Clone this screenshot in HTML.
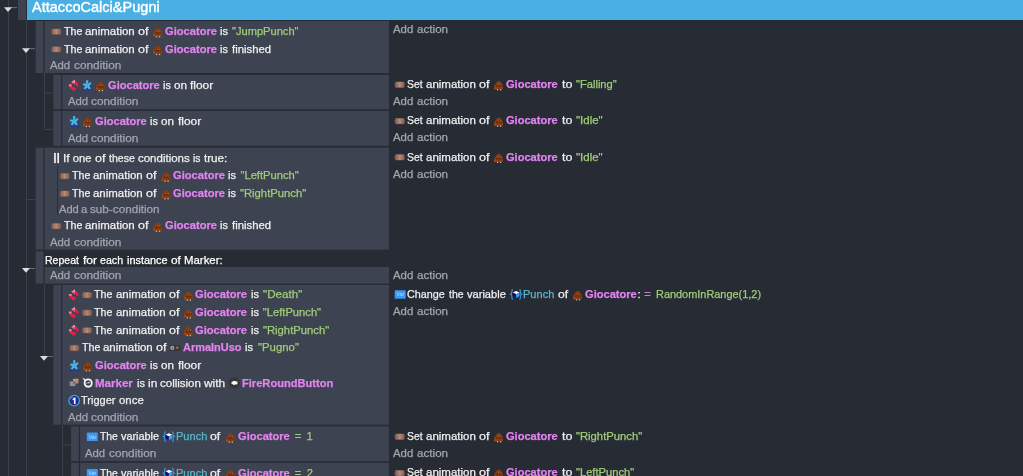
<!DOCTYPE html>
<html lang="en">
<head>
<meta charset="utf-8">
<title>AttaccoCalci&amp;Pugni - Events</title>
<style>
html,body{margin:0;padding:0;background:#272b34;}
body{width:1023px;height:476px;overflow:hidden;position:relative;font-family:"Liberation Sans", sans-serif;font-size:11.2px;}
#sheet{position:absolute;left:0;top:0;width:1023px;height:476px;overflow:hidden;background:#272b34;}
#txt{position:absolute;left:0;top:0;width:1023px;height:476px;will-change:transform;}
.i{position:absolute;overflow:visible;}
.t{position:absolute;white-space:pre;transform-origin:0 0;-webkit-text-stroke:0.25px currentColor;line-height:14px;height:14px;color:#f0f0f0;}
.n{color:#f0f0f0;}
.a{color:#a3a6ad;}
.o{color:#e283f0;font-weight:bold;}
.s{color:#a0cd7b;}
.v{color:#56b8cc;}
.op{color:#c77ddb;}
.tt{color:#ffffff;}
.h{color:#fff;font-size:14.4px;line-height:18px;height:18px;-webkit-text-stroke-width:0.4px;}
</style>
</head>
<body>
<div id="sheet">
<svg class="i" style="left:0;top:0" width="1023" height="476" viewBox="0 0 1023 476">
<defs><linearGradient id="fg" x1="0" x2="1" y1="0" y2="0"><stop offset="0" stop-color="#6b5049"/><stop offset="0.2" stop-color="#9a7362"/><stop offset="0.5" stop-color="#b58b79"/><stop offset="0.8" stop-color="#9a7362"/><stop offset="1" stop-color="#6b5049"/></linearGradient></defs>
<rect x="8" y="0" width="1" height="476" fill="#3b404d"/>
<rect x="26" y="21" width="1" height="476" fill="#3b404d"/>
<rect x="26" y="199" width="9" height="1" fill="#3b404d"/>
<rect x="44" y="73" width="1" height="57" fill="#3b404d"/>
<rect x="44" y="92.5" width="9" height="1" fill="#3b404d"/>
<rect x="44" y="129" width="9" height="1" fill="#3b404d"/>
<rect x="44" y="284" width="1" height="73" fill="#3b404d"/>
<rect x="62" y="425" width="1" height="60" fill="#3b404d"/>
<rect x="62" y="444.5" width="9" height="1" fill="#3b404d"/>
<rect x="18" y="0" width="8" height="20" fill="#3e4351"/>
<rect x="27" y="0" width="996" height="20" fill="#4ab0e4"/>
<rect x="35.7" y="21" width="7.8" height="52" fill="#3e4351"/>
<rect x="44.7" y="21" width="344.3" height="52" fill="#3e4351"/>
<rect x="53.4" y="75" width="7.8" height="34.3" fill="#3e4351"/>
<rect x="62.4" y="75" width="326.6" height="34.3" fill="#3e4351"/>
<rect x="53.4" y="111" width="7.8" height="34.8" fill="#3e4351"/>
<rect x="62.4" y="111" width="326.6" height="34.8" fill="#3e4351"/>
<rect x="35.7" y="147.7" width="7.8" height="101.9" fill="#3e4351"/>
<rect x="44.7" y="147.7" width="344.3" height="101.9" fill="#3e4351"/>
<rect x="57" y="166" width="1" height="49" fill="#2b2f3a"/>
<rect x="35.7" y="251.2" width="7.8" height="32.4" fill="#3e4351"/>
<rect x="44.7" y="267.0" width="344.3" height="16.6" fill="#3e4351"/>
<rect x="53.4" y="285" width="7.8" height="139.7" fill="#3e4351"/>
<rect x="62.4" y="285" width="326.6" height="139.7" fill="#3e4351"/>
<rect x="71.1" y="426.4" width="7.8" height="34.8" fill="#3e4351"/>
<rect x="80.1" y="426.4" width="308.9" height="34.8" fill="#3e4351"/>
<rect x="71.1" y="462.8" width="7.8" height="17.2" fill="#3e4351"/>
<rect x="80.1" y="462.8" width="308.9" height="17.2" fill="#3e4351"/>
<g transform="translate(3.40 6.40)"><rect x="8" y="0.9" width="5.6" height="0.8" fill="#7a7e88"/><path d="M0.6 0.8 L8.6 0.8 L4.6 5.6Z" fill="#dcdcdc"/></g>
<g transform="translate(21.40 47.40)"><rect x="8" y="0.9" width="5.6" height="0.8" fill="#7a7e88"/><path d="M0.6 0.8 L8.6 0.8 L4.6 5.6Z" fill="#dcdcdc"/></g>
<g transform="translate(21.40 267.20)"><rect x="8" y="0.9" width="5.6" height="0.8" fill="#7a7e88"/><path d="M0.6 0.8 L8.6 0.8 L4.6 5.6Z" fill="#dcdcdc"/></g>
<g transform="translate(39.40 355.20)"><rect x="8" y="0.9" width="5.6" height="0.8" fill="#7a7e88"/><path d="M0.6 0.8 L8.6 0.8 L4.6 5.6Z" fill="#dcdcdc"/></g>
<g transform="translate(51.10 28.50) scale(1.0000 1.0323)"><rect x="0" y="0" width="10.3" height="6.2" rx="2.2" fill="#6b5049"/><rect x="0.3" y="0.6" width="9.7" height="5" rx="1.8" fill="url(#fg)"/><rect x="3.1" y="0.4" width="0.5" height="5.4" fill="#7c5a4e" opacity="0.4"/><rect x="6.7" y="0.4" width="0.5" height="5.4" fill="#7c5a4e" opacity="0.4"/></g>
<g transform="translate(152.80 27.80)"><path d="M4.9 0 C6.1 0.5 7.4 1.9 8.3 3.3 C9 4.5 9.3 6 9.1 7.5 C9 8.3 8.6 8.7 7.9 8.7 L1.7 8.7 C0.7 8.7 0 8.1 0.1 6.8 C0.3 5.3 0.8 4.3 1.5 3.3 C2.4 1.9 3.7 0.5 4.9 0Z" fill="#8c3c0e"/><path d="M2.4 4.4 C3.6 3.3 7 3.3 8.2 4.4 L8 6.3 C6.6 5.6 4 5.6 2.6 6.3Z" fill="#64290a" opacity="0.85"/><path d="M0.4 6.6 C1.6 6.4 2.4 7 2.6 8.4 L1.4 8.5 C0.6 8.3 0.3 7.6 0.4 6.6Z" fill="#a9521a" opacity="0.7"/><rect x="4.2" y="3.5" width="0.9" height="0.9" fill="#8f8a86"/><rect x="6.4" y="3.5" width="0.9" height="0.9" fill="#8f8a86"/><rect x="3.1" y="8.4" width="1.3" height="1.2" fill="#c9bfbf"/><rect x="6.1" y="8.4" width="1.3" height="1.2" fill="#c9bfbf"/></g>
<g transform="translate(51.10 46.20) scale(1.0000 1.0323)"><rect x="0" y="0" width="10.3" height="6.2" rx="2.2" fill="#6b5049"/><rect x="0.3" y="0.6" width="9.7" height="5" rx="1.8" fill="url(#fg)"/><rect x="3.1" y="0.4" width="0.5" height="5.4" fill="#7c5a4e" opacity="0.4"/><rect x="6.7" y="0.4" width="0.5" height="5.4" fill="#7c5a4e" opacity="0.4"/></g>
<g transform="translate(152.80 45.50)"><path d="M4.9 0 C6.1 0.5 7.4 1.9 8.3 3.3 C9 4.5 9.3 6 9.1 7.5 C9 8.3 8.6 8.7 7.9 8.7 L1.7 8.7 C0.7 8.7 0 8.1 0.1 6.8 C0.3 5.3 0.8 4.3 1.5 3.3 C2.4 1.9 3.7 0.5 4.9 0Z" fill="#8c3c0e"/><path d="M2.4 4.4 C3.6 3.3 7 3.3 8.2 4.4 L8 6.3 C6.6 5.6 4 5.6 2.6 6.3Z" fill="#64290a" opacity="0.85"/><path d="M0.4 6.6 C1.6 6.4 2.4 7 2.6 8.4 L1.4 8.5 C0.6 8.3 0.3 7.6 0.4 6.6Z" fill="#a9521a" opacity="0.7"/><rect x="4.2" y="3.5" width="0.9" height="0.9" fill="#8f8a86"/><rect x="6.4" y="3.5" width="0.9" height="0.9" fill="#8f8a86"/><rect x="3.1" y="8.4" width="1.3" height="1.2" fill="#c9bfbf"/><rect x="6.1" y="8.4" width="1.3" height="1.2" fill="#c9bfbf"/></g>
<g transform="translate(68.70 79.80) scale(1.0000 0.9741)"><path d="M8.5 6.6 A3.3 3.3 0 0 0 5.4 2.5" fill="none" stroke="#ec1c48" stroke-width="2.5"/><path d="M6.2 -0.2 L6.2 5.2 L2.3 2.5Z" fill="#f0587a"/><path d="M6.2 0 L6.2 2.4 L3 2.4Z" fill="#f9a0b6"/><path d="M1.6 5 A3.3 3.3 0 0 0 4.7 9.1" fill="none" stroke="#ec1c48" stroke-width="2.5"/><path d="M0.1 4.6 L3 4.6 L2.8 6.8 L0.3 6.6Z" fill="#f57d9a"/><path d="M3.9 6.4 L3.9 11.8 L7.8 9.1Z" fill="#ec1c48"/></g>
<g transform="translate(82.30 80.00) scale(1.0000 1.0185)"><g transform="translate(0.45 0.2) scale(0.91 0.95)"><rect x="3.5" y="0" width="2.6" height="2.5" rx="0.8" fill="#46baf4"/><path d="M3.4 2.2 L6.2 2.2 L6.3 3.9 L8.4 1.8 L9.6 3.2 L7 6 L8.9 8.4 L7 9.6 L4.9 7.4 L2.8 9.6 L0.9 8.4 L3.1 6 L0.2 5.3 L0.7 3.2 L3.4 3.9Z" fill="#46baf4"/><path d="M4.2 2.6 L5.4 2.6 L5.4 6.8 L4.2 6.8Z" fill="#2a90e4" opacity="0.55"/></g><rect x="-0.4" y="9.75" width="10.4" height="1.05" fill="#2a3690"/></g>
<g transform="translate(95.60 81.60)"><path d="M4.9 0 C6.1 0.5 7.4 1.9 8.3 3.3 C9 4.5 9.3 6 9.1 7.5 C9 8.3 8.6 8.7 7.9 8.7 L1.7 8.7 C0.7 8.7 0 8.1 0.1 6.8 C0.3 5.3 0.8 4.3 1.5 3.3 C2.4 1.9 3.7 0.5 4.9 0Z" fill="#8c3c0e"/><path d="M2.4 4.4 C3.6 3.3 7 3.3 8.2 4.4 L8 6.3 C6.6 5.6 4 5.6 2.6 6.3Z" fill="#64290a" opacity="0.85"/><path d="M0.4 6.6 C1.6 6.4 2.4 7 2.6 8.4 L1.4 8.5 C0.6 8.3 0.3 7.6 0.4 6.6Z" fill="#a9521a" opacity="0.7"/><rect x="4.2" y="3.5" width="0.9" height="0.9" fill="#8f8a86"/><rect x="6.4" y="3.5" width="0.9" height="0.9" fill="#8f8a86"/><rect x="3.1" y="8.4" width="1.3" height="1.2" fill="#c9bfbf"/><rect x="6.1" y="8.4" width="1.3" height="1.2" fill="#c9bfbf"/></g>
<g transform="translate(394.60 81.50) scale(1.0000 1.0323)"><rect x="0" y="0" width="10.3" height="6.2" rx="2.2" fill="#6b5049"/><rect x="0.3" y="0.6" width="9.7" height="5" rx="1.8" fill="url(#fg)"/><rect x="3.1" y="0.4" width="0.5" height="5.4" fill="#7c5a4e" opacity="0.4"/><rect x="6.7" y="0.4" width="0.5" height="5.4" fill="#7c5a4e" opacity="0.4"/></g>
<g transform="translate(493.90 80.80)"><path d="M4.9 0 C6.1 0.5 7.4 1.9 8.3 3.3 C9 4.5 9.3 6 9.1 7.5 C9 8.3 8.6 8.7 7.9 8.7 L1.7 8.7 C0.7 8.7 0 8.1 0.1 6.8 C0.3 5.3 0.8 4.3 1.5 3.3 C2.4 1.9 3.7 0.5 4.9 0Z" fill="#8c3c0e"/><path d="M2.4 4.4 C3.6 3.3 7 3.3 8.2 4.4 L8 6.3 C6.6 5.6 4 5.6 2.6 6.3Z" fill="#64290a" opacity="0.85"/><path d="M0.4 6.6 C1.6 6.4 2.4 7 2.6 8.4 L1.4 8.5 C0.6 8.3 0.3 7.6 0.4 6.6Z" fill="#a9521a" opacity="0.7"/><rect x="4.2" y="3.5" width="0.9" height="0.9" fill="#8f8a86"/><rect x="6.4" y="3.5" width="0.9" height="0.9" fill="#8f8a86"/><rect x="3.1" y="8.4" width="1.3" height="1.2" fill="#c9bfbf"/><rect x="6.1" y="8.4" width="1.3" height="1.2" fill="#c9bfbf"/></g>
<g transform="translate(69.30 115.90) scale(1.0000 1.0185)"><g transform="translate(0.45 0.2) scale(0.91 0.95)"><rect x="3.5" y="0" width="2.6" height="2.5" rx="0.8" fill="#46baf4"/><path d="M3.4 2.2 L6.2 2.2 L6.3 3.9 L8.4 1.8 L9.6 3.2 L7 6 L8.9 8.4 L7 9.6 L4.9 7.4 L2.8 9.6 L0.9 8.4 L3.1 6 L0.2 5.3 L0.7 3.2 L3.4 3.9Z" fill="#46baf4"/><path d="M4.2 2.6 L5.4 2.6 L5.4 6.8 L4.2 6.8Z" fill="#2a90e4" opacity="0.55"/></g><rect x="-0.4" y="9.75" width="10.4" height="1.05" fill="#2a3690"/></g>
<g transform="translate(82.60 117.50)"><path d="M4.9 0 C6.1 0.5 7.4 1.9 8.3 3.3 C9 4.5 9.3 6 9.1 7.5 C9 8.3 8.6 8.7 7.9 8.7 L1.7 8.7 C0.7 8.7 0 8.1 0.1 6.8 C0.3 5.3 0.8 4.3 1.5 3.3 C2.4 1.9 3.7 0.5 4.9 0Z" fill="#8c3c0e"/><path d="M2.4 4.4 C3.6 3.3 7 3.3 8.2 4.4 L8 6.3 C6.6 5.6 4 5.6 2.6 6.3Z" fill="#64290a" opacity="0.85"/><path d="M0.4 6.6 C1.6 6.4 2.4 7 2.6 8.4 L1.4 8.5 C0.6 8.3 0.3 7.6 0.4 6.6Z" fill="#a9521a" opacity="0.7"/><rect x="4.2" y="3.5" width="0.9" height="0.9" fill="#8f8a86"/><rect x="6.4" y="3.5" width="0.9" height="0.9" fill="#8f8a86"/><rect x="3.1" y="8.4" width="1.3" height="1.2" fill="#c9bfbf"/><rect x="6.1" y="8.4" width="1.3" height="1.2" fill="#c9bfbf"/></g>
<g transform="translate(394.60 117.90) scale(1.0000 1.0323)"><rect x="0" y="0" width="10.3" height="6.2" rx="2.2" fill="#6b5049"/><rect x="0.3" y="0.6" width="9.7" height="5" rx="1.8" fill="url(#fg)"/><rect x="3.1" y="0.4" width="0.5" height="5.4" fill="#7c5a4e" opacity="0.4"/><rect x="6.7" y="0.4" width="0.5" height="5.4" fill="#7c5a4e" opacity="0.4"/></g>
<g transform="translate(493.90 117.20)"><path d="M4.9 0 C6.1 0.5 7.4 1.9 8.3 3.3 C9 4.5 9.3 6 9.1 7.5 C9 8.3 8.6 8.7 7.9 8.7 L1.7 8.7 C0.7 8.7 0 8.1 0.1 6.8 C0.3 5.3 0.8 4.3 1.5 3.3 C2.4 1.9 3.7 0.5 4.9 0Z" fill="#8c3c0e"/><path d="M2.4 4.4 C3.6 3.3 7 3.3 8.2 4.4 L8 6.3 C6.6 5.6 4 5.6 2.6 6.3Z" fill="#64290a" opacity="0.85"/><path d="M0.4 6.6 C1.6 6.4 2.4 7 2.6 8.4 L1.4 8.5 C0.6 8.3 0.3 7.6 0.4 6.6Z" fill="#a9521a" opacity="0.7"/><rect x="4.2" y="3.5" width="0.9" height="0.9" fill="#8f8a86"/><rect x="6.4" y="3.5" width="0.9" height="0.9" fill="#8f8a86"/><rect x="3.1" y="8.4" width="1.3" height="1.2" fill="#c9bfbf"/><rect x="6.1" y="8.4" width="1.3" height="1.2" fill="#c9bfbf"/></g>
<g transform="translate(53.60 152.90) scale(1.0000 1.0851)"><rect x="0.5" y="0" width="1.7" height="9.4" fill="#f4f4f4"/><rect x="3.7" y="0" width="1.7" height="9.4" fill="#f4f4f4"/></g>
<g transform="translate(59.60 172.90) scale(1.0000 1.0323)"><rect x="0" y="0" width="10.3" height="6.2" rx="2.2" fill="#6b5049"/><rect x="0.3" y="0.6" width="9.7" height="5" rx="1.8" fill="url(#fg)"/><rect x="3.1" y="0.4" width="0.5" height="5.4" fill="#7c5a4e" opacity="0.4"/><rect x="6.7" y="0.4" width="0.5" height="5.4" fill="#7c5a4e" opacity="0.4"/></g>
<g transform="translate(161.30 172.20)"><path d="M4.9 0 C6.1 0.5 7.4 1.9 8.3 3.3 C9 4.5 9.3 6 9.1 7.5 C9 8.3 8.6 8.7 7.9 8.7 L1.7 8.7 C0.7 8.7 0 8.1 0.1 6.8 C0.3 5.3 0.8 4.3 1.5 3.3 C2.4 1.9 3.7 0.5 4.9 0Z" fill="#8c3c0e"/><path d="M2.4 4.4 C3.6 3.3 7 3.3 8.2 4.4 L8 6.3 C6.6 5.6 4 5.6 2.6 6.3Z" fill="#64290a" opacity="0.85"/><path d="M0.4 6.6 C1.6 6.4 2.4 7 2.6 8.4 L1.4 8.5 C0.6 8.3 0.3 7.6 0.4 6.6Z" fill="#a9521a" opacity="0.7"/><rect x="4.2" y="3.5" width="0.9" height="0.9" fill="#8f8a86"/><rect x="6.4" y="3.5" width="0.9" height="0.9" fill="#8f8a86"/><rect x="3.1" y="8.4" width="1.3" height="1.2" fill="#c9bfbf"/><rect x="6.1" y="8.4" width="1.3" height="1.2" fill="#c9bfbf"/></g>
<g transform="translate(59.60 190.50) scale(1.0000 1.0323)"><rect x="0" y="0" width="10.3" height="6.2" rx="2.2" fill="#6b5049"/><rect x="0.3" y="0.6" width="9.7" height="5" rx="1.8" fill="url(#fg)"/><rect x="3.1" y="0.4" width="0.5" height="5.4" fill="#7c5a4e" opacity="0.4"/><rect x="6.7" y="0.4" width="0.5" height="5.4" fill="#7c5a4e" opacity="0.4"/></g>
<g transform="translate(161.30 189.80)"><path d="M4.9 0 C6.1 0.5 7.4 1.9 8.3 3.3 C9 4.5 9.3 6 9.1 7.5 C9 8.3 8.6 8.7 7.9 8.7 L1.7 8.7 C0.7 8.7 0 8.1 0.1 6.8 C0.3 5.3 0.8 4.3 1.5 3.3 C2.4 1.9 3.7 0.5 4.9 0Z" fill="#8c3c0e"/><path d="M2.4 4.4 C3.6 3.3 7 3.3 8.2 4.4 L8 6.3 C6.6 5.6 4 5.6 2.6 6.3Z" fill="#64290a" opacity="0.85"/><path d="M0.4 6.6 C1.6 6.4 2.4 7 2.6 8.4 L1.4 8.5 C0.6 8.3 0.3 7.6 0.4 6.6Z" fill="#a9521a" opacity="0.7"/><rect x="4.2" y="3.5" width="0.9" height="0.9" fill="#8f8a86"/><rect x="6.4" y="3.5" width="0.9" height="0.9" fill="#8f8a86"/><rect x="3.1" y="8.4" width="1.3" height="1.2" fill="#c9bfbf"/><rect x="6.1" y="8.4" width="1.3" height="1.2" fill="#c9bfbf"/></g>
<g transform="translate(51.10 222.90) scale(1.0000 1.0323)"><rect x="0" y="0" width="10.3" height="6.2" rx="2.2" fill="#6b5049"/><rect x="0.3" y="0.6" width="9.7" height="5" rx="1.8" fill="url(#fg)"/><rect x="3.1" y="0.4" width="0.5" height="5.4" fill="#7c5a4e" opacity="0.4"/><rect x="6.7" y="0.4" width="0.5" height="5.4" fill="#7c5a4e" opacity="0.4"/></g>
<g transform="translate(152.80 222.20)"><path d="M4.9 0 C6.1 0.5 7.4 1.9 8.3 3.3 C9 4.5 9.3 6 9.1 7.5 C9 8.3 8.6 8.7 7.9 8.7 L1.7 8.7 C0.7 8.7 0 8.1 0.1 6.8 C0.3 5.3 0.8 4.3 1.5 3.3 C2.4 1.9 3.7 0.5 4.9 0Z" fill="#8c3c0e"/><path d="M2.4 4.4 C3.6 3.3 7 3.3 8.2 4.4 L8 6.3 C6.6 5.6 4 5.6 2.6 6.3Z" fill="#64290a" opacity="0.85"/><path d="M0.4 6.6 C1.6 6.4 2.4 7 2.6 8.4 L1.4 8.5 C0.6 8.3 0.3 7.6 0.4 6.6Z" fill="#a9521a" opacity="0.7"/><rect x="4.2" y="3.5" width="0.9" height="0.9" fill="#8f8a86"/><rect x="6.4" y="3.5" width="0.9" height="0.9" fill="#8f8a86"/><rect x="3.1" y="8.4" width="1.3" height="1.2" fill="#c9bfbf"/><rect x="6.1" y="8.4" width="1.3" height="1.2" fill="#c9bfbf"/></g>
<g transform="translate(394.60 154.10) scale(1.0000 1.0323)"><rect x="0" y="0" width="10.3" height="6.2" rx="2.2" fill="#6b5049"/><rect x="0.3" y="0.6" width="9.7" height="5" rx="1.8" fill="url(#fg)"/><rect x="3.1" y="0.4" width="0.5" height="5.4" fill="#7c5a4e" opacity="0.4"/><rect x="6.7" y="0.4" width="0.5" height="5.4" fill="#7c5a4e" opacity="0.4"/></g>
<g transform="translate(493.90 153.40)"><path d="M4.9 0 C6.1 0.5 7.4 1.9 8.3 3.3 C9 4.5 9.3 6 9.1 7.5 C9 8.3 8.6 8.7 7.9 8.7 L1.7 8.7 C0.7 8.7 0 8.1 0.1 6.8 C0.3 5.3 0.8 4.3 1.5 3.3 C2.4 1.9 3.7 0.5 4.9 0Z" fill="#8c3c0e"/><path d="M2.4 4.4 C3.6 3.3 7 3.3 8.2 4.4 L8 6.3 C6.6 5.6 4 5.6 2.6 6.3Z" fill="#64290a" opacity="0.85"/><path d="M0.4 6.6 C1.6 6.4 2.4 7 2.6 8.4 L1.4 8.5 C0.6 8.3 0.3 7.6 0.4 6.6Z" fill="#a9521a" opacity="0.7"/><rect x="4.2" y="3.5" width="0.9" height="0.9" fill="#8f8a86"/><rect x="6.4" y="3.5" width="0.9" height="0.9" fill="#8f8a86"/><rect x="3.1" y="8.4" width="1.3" height="1.2" fill="#c9bfbf"/><rect x="6.1" y="8.4" width="1.3" height="1.2" fill="#c9bfbf"/></g>
<g transform="translate(68.70 289.40) scale(1.0000 0.9741)"><path d="M8.5 6.6 A3.3 3.3 0 0 0 5.4 2.5" fill="none" stroke="#ec1c48" stroke-width="2.5"/><path d="M6.2 -0.2 L6.2 5.2 L2.3 2.5Z" fill="#f0587a"/><path d="M6.2 0 L6.2 2.4 L3 2.4Z" fill="#f9a0b6"/><path d="M1.6 5 A3.3 3.3 0 0 0 4.7 9.1" fill="none" stroke="#ec1c48" stroke-width="2.5"/><path d="M0.1 4.6 L3 4.6 L2.8 6.8 L0.3 6.6Z" fill="#f57d9a"/><path d="M3.9 6.4 L3.9 11.8 L7.8 9.1Z" fill="#ec1c48"/></g>
<g transform="translate(81.90 291.90) scale(1.0000 1.0323)"><rect x="0" y="0" width="10.3" height="6.2" rx="2.2" fill="#6b5049"/><rect x="0.3" y="0.6" width="9.7" height="5" rx="1.8" fill="url(#fg)"/><rect x="3.1" y="0.4" width="0.5" height="5.4" fill="#7c5a4e" opacity="0.4"/><rect x="6.7" y="0.4" width="0.5" height="5.4" fill="#7c5a4e" opacity="0.4"/></g>
<g transform="translate(183.60 291.20)"><path d="M4.9 0 C6.1 0.5 7.4 1.9 8.3 3.3 C9 4.5 9.3 6 9.1 7.5 C9 8.3 8.6 8.7 7.9 8.7 L1.7 8.7 C0.7 8.7 0 8.1 0.1 6.8 C0.3 5.3 0.8 4.3 1.5 3.3 C2.4 1.9 3.7 0.5 4.9 0Z" fill="#8c3c0e"/><path d="M2.4 4.4 C3.6 3.3 7 3.3 8.2 4.4 L8 6.3 C6.6 5.6 4 5.6 2.6 6.3Z" fill="#64290a" opacity="0.85"/><path d="M0.4 6.6 C1.6 6.4 2.4 7 2.6 8.4 L1.4 8.5 C0.6 8.3 0.3 7.6 0.4 6.6Z" fill="#a9521a" opacity="0.7"/><rect x="4.2" y="3.5" width="0.9" height="0.9" fill="#8f8a86"/><rect x="6.4" y="3.5" width="0.9" height="0.9" fill="#8f8a86"/><rect x="3.1" y="8.4" width="1.3" height="1.2" fill="#c9bfbf"/><rect x="6.1" y="8.4" width="1.3" height="1.2" fill="#c9bfbf"/></g>
<g transform="translate(68.70 307.10) scale(1.0000 0.9741)"><path d="M8.5 6.6 A3.3 3.3 0 0 0 5.4 2.5" fill="none" stroke="#ec1c48" stroke-width="2.5"/><path d="M6.2 -0.2 L6.2 5.2 L2.3 2.5Z" fill="#f0587a"/><path d="M6.2 0 L6.2 2.4 L3 2.4Z" fill="#f9a0b6"/><path d="M1.6 5 A3.3 3.3 0 0 0 4.7 9.1" fill="none" stroke="#ec1c48" stroke-width="2.5"/><path d="M0.1 4.6 L3 4.6 L2.8 6.8 L0.3 6.6Z" fill="#f57d9a"/><path d="M3.9 6.4 L3.9 11.8 L7.8 9.1Z" fill="#ec1c48"/></g>
<g transform="translate(81.90 309.60) scale(1.0000 1.0323)"><rect x="0" y="0" width="10.3" height="6.2" rx="2.2" fill="#6b5049"/><rect x="0.3" y="0.6" width="9.7" height="5" rx="1.8" fill="url(#fg)"/><rect x="3.1" y="0.4" width="0.5" height="5.4" fill="#7c5a4e" opacity="0.4"/><rect x="6.7" y="0.4" width="0.5" height="5.4" fill="#7c5a4e" opacity="0.4"/></g>
<g transform="translate(183.60 308.90)"><path d="M4.9 0 C6.1 0.5 7.4 1.9 8.3 3.3 C9 4.5 9.3 6 9.1 7.5 C9 8.3 8.6 8.7 7.9 8.7 L1.7 8.7 C0.7 8.7 0 8.1 0.1 6.8 C0.3 5.3 0.8 4.3 1.5 3.3 C2.4 1.9 3.7 0.5 4.9 0Z" fill="#8c3c0e"/><path d="M2.4 4.4 C3.6 3.3 7 3.3 8.2 4.4 L8 6.3 C6.6 5.6 4 5.6 2.6 6.3Z" fill="#64290a" opacity="0.85"/><path d="M0.4 6.6 C1.6 6.4 2.4 7 2.6 8.4 L1.4 8.5 C0.6 8.3 0.3 7.6 0.4 6.6Z" fill="#a9521a" opacity="0.7"/><rect x="4.2" y="3.5" width="0.9" height="0.9" fill="#8f8a86"/><rect x="6.4" y="3.5" width="0.9" height="0.9" fill="#8f8a86"/><rect x="3.1" y="8.4" width="1.3" height="1.2" fill="#c9bfbf"/><rect x="6.1" y="8.4" width="1.3" height="1.2" fill="#c9bfbf"/></g>
<g transform="translate(68.70 324.70) scale(1.0000 0.9741)"><path d="M8.5 6.6 A3.3 3.3 0 0 0 5.4 2.5" fill="none" stroke="#ec1c48" stroke-width="2.5"/><path d="M6.2 -0.2 L6.2 5.2 L2.3 2.5Z" fill="#f0587a"/><path d="M6.2 0 L6.2 2.4 L3 2.4Z" fill="#f9a0b6"/><path d="M1.6 5 A3.3 3.3 0 0 0 4.7 9.1" fill="none" stroke="#ec1c48" stroke-width="2.5"/><path d="M0.1 4.6 L3 4.6 L2.8 6.8 L0.3 6.6Z" fill="#f57d9a"/><path d="M3.9 6.4 L3.9 11.8 L7.8 9.1Z" fill="#ec1c48"/></g>
<g transform="translate(81.90 327.20) scale(1.0000 1.0323)"><rect x="0" y="0" width="10.3" height="6.2" rx="2.2" fill="#6b5049"/><rect x="0.3" y="0.6" width="9.7" height="5" rx="1.8" fill="url(#fg)"/><rect x="3.1" y="0.4" width="0.5" height="5.4" fill="#7c5a4e" opacity="0.4"/><rect x="6.7" y="0.4" width="0.5" height="5.4" fill="#7c5a4e" opacity="0.4"/></g>
<g transform="translate(183.60 326.50)"><path d="M4.9 0 C6.1 0.5 7.4 1.9 8.3 3.3 C9 4.5 9.3 6 9.1 7.5 C9 8.3 8.6 8.7 7.9 8.7 L1.7 8.7 C0.7 8.7 0 8.1 0.1 6.8 C0.3 5.3 0.8 4.3 1.5 3.3 C2.4 1.9 3.7 0.5 4.9 0Z" fill="#8c3c0e"/><path d="M2.4 4.4 C3.6 3.3 7 3.3 8.2 4.4 L8 6.3 C6.6 5.6 4 5.6 2.6 6.3Z" fill="#64290a" opacity="0.85"/><path d="M0.4 6.6 C1.6 6.4 2.4 7 2.6 8.4 L1.4 8.5 C0.6 8.3 0.3 7.6 0.4 6.6Z" fill="#a9521a" opacity="0.7"/><rect x="4.2" y="3.5" width="0.9" height="0.9" fill="#8f8a86"/><rect x="6.4" y="3.5" width="0.9" height="0.9" fill="#8f8a86"/><rect x="3.1" y="8.4" width="1.3" height="1.2" fill="#c9bfbf"/><rect x="6.1" y="8.4" width="1.3" height="1.2" fill="#c9bfbf"/></g>
<g transform="translate(69.10 344.80) scale(1.0000 1.0323)"><rect x="0" y="0" width="10.3" height="6.2" rx="2.2" fill="#6b5049"/><rect x="0.3" y="0.6" width="9.7" height="5" rx="1.8" fill="url(#fg)"/><rect x="3.1" y="0.4" width="0.5" height="5.4" fill="#7c5a4e" opacity="0.4"/><rect x="6.7" y="0.4" width="0.5" height="5.4" fill="#7c5a4e" opacity="0.4"/></g>
<g transform="translate(169.60 344.90)"><rect x="0" y="0" width="11" height="6.2" rx="1" fill="#383635"/><circle cx="2.7" cy="3" r="2.1" fill="#a0a6ad"/><circle cx="2.8" cy="3" r="0.8" fill="#50585a"/><rect x="6.4" y="1.5" width="2.6" height="2.6" rx="0.9" fill="#8d6a52"/></g>
<g transform="translate(69.40 360.10) scale(1.0000 1.0185)"><g transform="translate(0.45 0.2) scale(0.91 0.95)"><rect x="3.5" y="0" width="2.6" height="2.5" rx="0.8" fill="#46baf4"/><path d="M3.4 2.2 L6.2 2.2 L6.3 3.9 L8.4 1.8 L9.6 3.2 L7 6 L8.9 8.4 L7 9.6 L4.9 7.4 L2.8 9.6 L0.9 8.4 L3.1 6 L0.2 5.3 L0.7 3.2 L3.4 3.9Z" fill="#46baf4"/><path d="M4.2 2.6 L5.4 2.6 L5.4 6.8 L4.2 6.8Z" fill="#2a90e4" opacity="0.55"/></g><rect x="-0.4" y="9.75" width="10.4" height="1.05" fill="#2a3690"/></g>
<g transform="translate(82.70 361.70)"><path d="M4.9 0 C6.1 0.5 7.4 1.9 8.3 3.3 C9 4.5 9.3 6 9.1 7.5 C9 8.3 8.6 8.7 7.9 8.7 L1.7 8.7 C0.7 8.7 0 8.1 0.1 6.8 C0.3 5.3 0.8 4.3 1.5 3.3 C2.4 1.9 3.7 0.5 4.9 0Z" fill="#8c3c0e"/><path d="M2.4 4.4 C3.6 3.3 7 3.3 8.2 4.4 L8 6.3 C6.6 5.6 4 5.6 2.6 6.3Z" fill="#64290a" opacity="0.85"/><path d="M0.4 6.6 C1.6 6.4 2.4 7 2.6 8.4 L1.4 8.5 C0.6 8.3 0.3 7.6 0.4 6.6Z" fill="#a9521a" opacity="0.7"/><rect x="4.2" y="3.5" width="0.9" height="0.9" fill="#8f8a86"/><rect x="6.4" y="3.5" width="0.9" height="0.9" fill="#8f8a86"/><rect x="3.1" y="8.4" width="1.3" height="1.2" fill="#c9bfbf"/><rect x="6.1" y="8.4" width="1.3" height="1.2" fill="#c9bfbf"/></g>
<g transform="translate(69.80 378.90)"><rect x="3.2" y="0" width="5.4" height="4.6" fill="#b38c76"/><rect x="3.2" y="0" width="5.4" height="1.2" fill="#c39b82"/><rect x="0" y="2.8" width="5.6" height="4.4" fill="#8b9098"/><rect x="0" y="2.8" width="5.6" height="1.2" fill="#9ba0a8"/><rect x="3.2" y="2.8" width="2.4" height="1.8" fill="#6b6666"/></g>
<g transform="translate(82.00 377.40)"><path d="M2.6 7.6 A4.1 4.1 0 0 0 10 7.2" fill="none" stroke="#a88672" stroke-width="1.5"/><circle cx="6.2" cy="5.6" r="3.6" fill="#3b3e49" stroke="#f4f4f4" stroke-width="1.8"/><path d="M0.2 0.1 L4.7 2.5 L3 4.3Z" fill="#f2f2f2"/><path d="M3.4 6 L8.4 4.1 L7.3 5.9Z" fill="#f2f2f2"/></g>
<g transform="translate(228.50 377.20)"><circle cx="5.7" cy="5.7" r="5.7" fill="#3b3437"/><path d="M2.3 5.7 L5.2 3.6 C6.4 3.9 7.6 4.2 8.9 4.4 L8.9 7 C7.6 7.2 6.4 7.5 5.2 7.8Z" fill="#f6f6f6"/></g>
<g transform="translate(68.20 394.60)"><circle cx="6" cy="6" r="5.3" fill="#1f2b8e" stroke="#39a2e0" stroke-width="1.3"/><path d="M2.2 4.6 A4 4 0 0 1 5 2.1" fill="none" stroke="#6c8fd8" stroke-width="0.9"/><path d="M4.2 4.6 L6.2 2.9 L7.3 2.9 L7.3 9.4 L5.7 9.4 L5.7 4.9 L4.7 5.7Z" fill="#ffffff"/></g>
<g transform="translate(394.70 290.20) scale(1.0000 1.0488)"><rect x="0" y="0" width="11" height="8.2" rx="0.8" fill="#3d97f4"/><text x="5.5" y="5.9" font-family="Liberation Sans, sans-serif" font-size="5.2" fill="#cfe6ff" fill-opacity="0.85" text-anchor="middle">Var</text></g>
<g transform="translate(510.20 289.10)"><path d="M2.7 0.4 C1.4 0.4 1.7 1.6 1.7 3 C1.7 4.4 1.2 4.9 0.4 5.2 C1.2 5.5 1.7 6 1.7 7.4 C1.7 8.8 1.4 10 2.7 10" fill="none" stroke="#3a9ae6" stroke-width="1.1"/><path d="M9.1 0.4 C10.4 0.4 10.1 1.6 10.1 3 C10.1 4.4 10.6 4.9 11.4 5.2 C10.6 5.5 10.1 6 10.1 7.4 C10.1 8.8 10.4 10 9.1 10" fill="none" stroke="#3a9ae6" stroke-width="1.1"/><path d="M5.9 1.8 L9.3 3.4 L5.9 5.2 L2.6 3.4Z" fill="#ffffff"/><path d="M2.6 3.4 L5.9 5.2 L5.9 8.8 L2.6 7Z" fill="#0d0f7a"/><path d="M9.3 3.4 L5.9 5.2 L5.9 8.8 L9.3 7Z" fill="#3d9ff0"/></g>
<g transform="translate(572.80 290.80)"><path d="M4.9 0 C6.1 0.5 7.4 1.9 8.3 3.3 C9 4.5 9.3 6 9.1 7.5 C9 8.3 8.6 8.7 7.9 8.7 L1.7 8.7 C0.7 8.7 0 8.1 0.1 6.8 C0.3 5.3 0.8 4.3 1.5 3.3 C2.4 1.9 3.7 0.5 4.9 0Z" fill="#8c3c0e"/><path d="M2.4 4.4 C3.6 3.3 7 3.3 8.2 4.4 L8 6.3 C6.6 5.6 4 5.6 2.6 6.3Z" fill="#64290a" opacity="0.85"/><path d="M0.4 6.6 C1.6 6.4 2.4 7 2.6 8.4 L1.4 8.5 C0.6 8.3 0.3 7.6 0.4 6.6Z" fill="#a9521a" opacity="0.7"/><rect x="4.2" y="3.5" width="0.9" height="0.9" fill="#8f8a86"/><rect x="6.4" y="3.5" width="0.9" height="0.9" fill="#8f8a86"/><rect x="3.1" y="8.4" width="1.3" height="1.2" fill="#c9bfbf"/><rect x="6.1" y="8.4" width="1.3" height="1.2" fill="#c9bfbf"/></g>
<g transform="translate(86.80 432.50) scale(1.0000 1.0488)"><rect x="0" y="0" width="11" height="8.2" rx="0.8" fill="#3d97f4"/><text x="5.5" y="5.9" font-family="Liberation Sans, sans-serif" font-size="5.2" fill="#cfe6ff" fill-opacity="0.85" text-anchor="middle">Var</text></g>
<g transform="translate(163.00 431.40)"><path d="M2.7 0.4 C1.4 0.4 1.7 1.6 1.7 3 C1.7 4.4 1.2 4.9 0.4 5.2 C1.2 5.5 1.7 6 1.7 7.4 C1.7 8.8 1.4 10 2.7 10" fill="none" stroke="#3a9ae6" stroke-width="1.1"/><path d="M9.1 0.4 C10.4 0.4 10.1 1.6 10.1 3 C10.1 4.4 10.6 4.9 11.4 5.2 C10.6 5.5 10.1 6 10.1 7.4 C10.1 8.8 10.4 10 9.1 10" fill="none" stroke="#3a9ae6" stroke-width="1.1"/><path d="M5.9 1.8 L9.3 3.4 L5.9 5.2 L2.6 3.4Z" fill="#ffffff"/><path d="M2.6 3.4 L5.9 5.2 L5.9 8.8 L2.6 7Z" fill="#0d0f7a"/><path d="M9.3 3.4 L5.9 5.2 L5.9 8.8 L9.3 7Z" fill="#3d9ff0"/></g>
<g transform="translate(225.60 433.10)"><path d="M4.9 0 C6.1 0.5 7.4 1.9 8.3 3.3 C9 4.5 9.3 6 9.1 7.5 C9 8.3 8.6 8.7 7.9 8.7 L1.7 8.7 C0.7 8.7 0 8.1 0.1 6.8 C0.3 5.3 0.8 4.3 1.5 3.3 C2.4 1.9 3.7 0.5 4.9 0Z" fill="#8c3c0e"/><path d="M2.4 4.4 C3.6 3.3 7 3.3 8.2 4.4 L8 6.3 C6.6 5.6 4 5.6 2.6 6.3Z" fill="#64290a" opacity="0.85"/><path d="M0.4 6.6 C1.6 6.4 2.4 7 2.6 8.4 L1.4 8.5 C0.6 8.3 0.3 7.6 0.4 6.6Z" fill="#a9521a" opacity="0.7"/><rect x="4.2" y="3.5" width="0.9" height="0.9" fill="#8f8a86"/><rect x="6.4" y="3.5" width="0.9" height="0.9" fill="#8f8a86"/><rect x="3.1" y="8.4" width="1.3" height="1.2" fill="#c9bfbf"/><rect x="6.1" y="8.4" width="1.3" height="1.2" fill="#c9bfbf"/></g>
<g transform="translate(394.60 433.50) scale(1.0000 1.0323)"><rect x="0" y="0" width="10.3" height="6.2" rx="2.2" fill="#6b5049"/><rect x="0.3" y="0.6" width="9.7" height="5" rx="1.8" fill="url(#fg)"/><rect x="3.1" y="0.4" width="0.5" height="5.4" fill="#7c5a4e" opacity="0.4"/><rect x="6.7" y="0.4" width="0.5" height="5.4" fill="#7c5a4e" opacity="0.4"/></g>
<g transform="translate(493.90 432.80)"><path d="M4.9 0 C6.1 0.5 7.4 1.9 8.3 3.3 C9 4.5 9.3 6 9.1 7.5 C9 8.3 8.6 8.7 7.9 8.7 L1.7 8.7 C0.7 8.7 0 8.1 0.1 6.8 C0.3 5.3 0.8 4.3 1.5 3.3 C2.4 1.9 3.7 0.5 4.9 0Z" fill="#8c3c0e"/><path d="M2.4 4.4 C3.6 3.3 7 3.3 8.2 4.4 L8 6.3 C6.6 5.6 4 5.6 2.6 6.3Z" fill="#64290a" opacity="0.85"/><path d="M0.4 6.6 C1.6 6.4 2.4 7 2.6 8.4 L1.4 8.5 C0.6 8.3 0.3 7.6 0.4 6.6Z" fill="#a9521a" opacity="0.7"/><rect x="4.2" y="3.5" width="0.9" height="0.9" fill="#8f8a86"/><rect x="6.4" y="3.5" width="0.9" height="0.9" fill="#8f8a86"/><rect x="3.1" y="8.4" width="1.3" height="1.2" fill="#c9bfbf"/><rect x="6.1" y="8.4" width="1.3" height="1.2" fill="#c9bfbf"/></g>
<g transform="translate(86.80 469.10) scale(1.0000 1.0488)"><rect x="0" y="0" width="11" height="8.2" rx="0.8" fill="#3d97f4"/><text x="5.5" y="5.9" font-family="Liberation Sans, sans-serif" font-size="5.2" fill="#cfe6ff" fill-opacity="0.85" text-anchor="middle">Var</text></g>
<g transform="translate(163.00 468.00)"><path d="M2.7 0.4 C1.4 0.4 1.7 1.6 1.7 3 C1.7 4.4 1.2 4.9 0.4 5.2 C1.2 5.5 1.7 6 1.7 7.4 C1.7 8.8 1.4 10 2.7 10" fill="none" stroke="#3a9ae6" stroke-width="1.1"/><path d="M9.1 0.4 C10.4 0.4 10.1 1.6 10.1 3 C10.1 4.4 10.6 4.9 11.4 5.2 C10.6 5.5 10.1 6 10.1 7.4 C10.1 8.8 10.4 10 9.1 10" fill="none" stroke="#3a9ae6" stroke-width="1.1"/><path d="M5.9 1.8 L9.3 3.4 L5.9 5.2 L2.6 3.4Z" fill="#ffffff"/><path d="M2.6 3.4 L5.9 5.2 L5.9 8.8 L2.6 7Z" fill="#0d0f7a"/><path d="M9.3 3.4 L5.9 5.2 L5.9 8.8 L9.3 7Z" fill="#3d9ff0"/></g>
<g transform="translate(225.60 469.70)"><path d="M4.9 0 C6.1 0.5 7.4 1.9 8.3 3.3 C9 4.5 9.3 6 9.1 7.5 C9 8.3 8.6 8.7 7.9 8.7 L1.7 8.7 C0.7 8.7 0 8.1 0.1 6.8 C0.3 5.3 0.8 4.3 1.5 3.3 C2.4 1.9 3.7 0.5 4.9 0Z" fill="#8c3c0e"/><path d="M2.4 4.4 C3.6 3.3 7 3.3 8.2 4.4 L8 6.3 C6.6 5.6 4 5.6 2.6 6.3Z" fill="#64290a" opacity="0.85"/><path d="M0.4 6.6 C1.6 6.4 2.4 7 2.6 8.4 L1.4 8.5 C0.6 8.3 0.3 7.6 0.4 6.6Z" fill="#a9521a" opacity="0.7"/><rect x="4.2" y="3.5" width="0.9" height="0.9" fill="#8f8a86"/><rect x="6.4" y="3.5" width="0.9" height="0.9" fill="#8f8a86"/><rect x="3.1" y="8.4" width="1.3" height="1.2" fill="#c9bfbf"/><rect x="6.1" y="8.4" width="1.3" height="1.2" fill="#c9bfbf"/></g>
<g transform="translate(394.60 469.90) scale(1.0000 1.0323)"><rect x="0" y="0" width="10.3" height="6.2" rx="2.2" fill="#6b5049"/><rect x="0.3" y="0.6" width="9.7" height="5" rx="1.8" fill="url(#fg)"/><rect x="3.1" y="0.4" width="0.5" height="5.4" fill="#7c5a4e" opacity="0.4"/><rect x="6.7" y="0.4" width="0.5" height="5.4" fill="#7c5a4e" opacity="0.4"/></g>
<g transform="translate(493.90 469.20)"><path d="M4.9 0 C6.1 0.5 7.4 1.9 8.3 3.3 C9 4.5 9.3 6 9.1 7.5 C9 8.3 8.6 8.7 7.9 8.7 L1.7 8.7 C0.7 8.7 0 8.1 0.1 6.8 C0.3 5.3 0.8 4.3 1.5 3.3 C2.4 1.9 3.7 0.5 4.9 0Z" fill="#8c3c0e"/><path d="M2.4 4.4 C3.6 3.3 7 3.3 8.2 4.4 L8 6.3 C6.6 5.6 4 5.6 2.6 6.3Z" fill="#64290a" opacity="0.85"/><path d="M0.4 6.6 C1.6 6.4 2.4 7 2.6 8.4 L1.4 8.5 C0.6 8.3 0.3 7.6 0.4 6.6Z" fill="#a9521a" opacity="0.7"/><rect x="4.2" y="3.5" width="0.9" height="0.9" fill="#8f8a86"/><rect x="6.4" y="3.5" width="0.9" height="0.9" fill="#8f8a86"/><rect x="3.1" y="8.4" width="1.3" height="1.2" fill="#c9bfbf"/><rect x="6.1" y="8.4" width="1.3" height="1.2" fill="#c9bfbf"/></g>
</svg>
<div id="txt">
<span class="t h" style="left:32.45px;top:-2px;transform:scaleX(1.0107)">AttaccoCalci&amp;Pugni </span>
<span class="t n" style="left:63.50px;top:24px;transform:scaleX(0.9526)">The </span>
<span class="t n" style="left:84.84px;top:24px;transform:scaleX(1.0241)">animation </span>
<span class="t n" style="left:137.72px;top:24px;transform:scaleX(1.1243)">of </span>
<span class="t o" style="left:164.65px;top:24px;transform:scaleX(0.9952)">Giocatore </span>
<span class="t n" style="left:219.91px;top:24px;transform:scaleX(0.9867)">is </span>
<span class="t s" style="left:231.95px;top:24px;transform:scaleX(0.9925)">"JumpPunch" </span>
<span class="t n" style="left:63.50px;top:42px;transform:scaleX(0.9526)">The </span>
<span class="t n" style="left:84.84px;top:42px;transform:scaleX(1.0241)">animation </span>
<span class="t n" style="left:137.72px;top:42px;transform:scaleX(1.1243)">of </span>
<span class="t o" style="left:164.65px;top:42px;transform:scaleX(0.9952)">Giocatore </span>
<span class="t n" style="left:220.21px;top:42px;transform:scaleX(0.9733)">is </span>
<span class="t n" style="left:231.50px;top:42px;transform:scaleX(1.0132)">finished </span>
<span class="t a" style="left:49.75px;top:58px;transform:scaleX(1.0127)">Add </span>
<span class="t a" style="left:73.54px;top:58px;transform:scaleX(1.0568)">condition </span>
<span class="t a" style="left:393.35px;top:22px;transform:scaleX(1.0177)">Add </span>
<span class="t a" style="left:416.84px;top:22px;transform:scaleX(1.0414)">action </span>
<span class="t o" style="left:107.55px;top:78px;transform:scaleX(0.9913)">Giocatore </span>
<span class="t n" style="left:163.02px;top:78px;transform:scaleX(0.9667)">is </span>
<span class="t n" style="left:173.74px;top:78px;transform:scaleX(1.0468)">on </span>
<span class="t n" style="left:190.40px;top:78px;transform:scaleX(1.0667)">floor </span>
<span class="t a" style="left:67.55px;top:94px;transform:scaleX(1.0127)">Add </span>
<span class="t a" style="left:91.34px;top:94px;transform:scaleX(1.0568)">condition </span>
<span class="t n" style="left:407.07px;top:77px;transform:scaleX(0.9254)">Set </span>
<span class="t n" style="left:425.84px;top:77px;transform:scaleX(1.0283)">animation </span>
<span class="t n" style="left:478.72px;top:77px;transform:scaleX(1.1351)">of </span>
<span class="t o" style="left:506.05px;top:77px;transform:scaleX(0.9894)">Giocatore </span>
<span class="t n" style="left:561.50px;top:77px;transform:scaleX(1.1111)">to </span>
<span class="t s" style="left:575.95px;top:77px;transform:scaleX(0.9951)">"Falling" </span>
<span class="t a" style="left:393.35px;top:94px;transform:scaleX(1.0177)">Add </span>
<span class="t a" style="left:416.84px;top:94px;transform:scaleX(1.0414)">action </span>
<span class="t o" style="left:94.85px;top:114px;transform:scaleX(0.9913)">Giocatore </span>
<span class="t n" style="left:150.32px;top:114px;transform:scaleX(0.9667)">is </span>
<span class="t n" style="left:161.04px;top:114px;transform:scaleX(1.0468)">on </span>
<span class="t n" style="left:177.70px;top:114px;transform:scaleX(1.0667)">floor </span>
<span class="t a" style="left:67.55px;top:131px;transform:scaleX(1.0127)">Add </span>
<span class="t a" style="left:91.34px;top:131px;transform:scaleX(1.0568)">condition </span>
<span class="t n" style="left:407.07px;top:113px;transform:scaleX(0.9254)">Set </span>
<span class="t n" style="left:425.84px;top:113px;transform:scaleX(1.0283)">animation </span>
<span class="t n" style="left:478.72px;top:113px;transform:scaleX(1.1351)">of </span>
<span class="t o" style="left:506.05px;top:113px;transform:scaleX(0.9894)">Giocatore </span>
<span class="t n" style="left:561.50px;top:113px;transform:scaleX(1.1111)">to </span>
<span class="t s" style="left:575.94px;top:113px;transform:scaleX(1.0275)">"Idle" </span>
<span class="t a" style="left:393.35px;top:130px;transform:scaleX(1.0177)">Add </span>
<span class="t a" style="left:416.84px;top:130px;transform:scaleX(1.0414)">action </span>
<span class="t n" style="left:62.79px;top:151px;transform:scaleX(1.0783)">If </span>
<span class="t n" style="left:72.75px;top:151px">one </span>
<span class="t n" style="left:94.72px;top:151px;transform:scaleX(1.1243)">of </span>
<span class="t n" style="left:108.50px;top:151px;transform:scaleX(0.9444)">these </span>
<span class="t n" style="left:138.14px;top:151px;transform:scaleX(1.0260)">conditions </span>
<span class="t n" style="left:193.34px;top:151px;transform:scaleX(0.9200)">is </span>
<span class="t n" style="left:204.20px;top:151px;transform:scaleX(1.0419)">true: </span>
<span class="t n" style="left:72.00px;top:168px;transform:scaleX(0.9526)">The </span>
<span class="t n" style="left:93.34px;top:168px;transform:scaleX(1.0241)">animation </span>
<span class="t n" style="left:146.22px;top:168px;transform:scaleX(1.1243)">of </span>
<span class="t o" style="left:173.15px;top:168px;transform:scaleX(0.9952)">Giocatore </span>
<span class="t n" style="left:228.41px;top:168px;transform:scaleX(0.9867)">is </span>
<span class="t s" style="left:240.45px;top:168px">"LeftPunch" </span>
<span class="t n" style="left:72.00px;top:186px;transform:scaleX(0.9526)">The </span>
<span class="t n" style="left:93.34px;top:186px;transform:scaleX(1.0241)">animation </span>
<span class="t n" style="left:146.22px;top:186px;transform:scaleX(1.1243)">of </span>
<span class="t o" style="left:173.15px;top:186px;transform:scaleX(0.9952)">Giocatore </span>
<span class="t n" style="left:228.41px;top:186px;transform:scaleX(0.9867)">is </span>
<span class="t s" style="left:240.45px;top:186px;transform:scaleX(1.0054)">"RightPunch" </span>
<span class="t a" style="left:58.55px;top:202px;transform:scaleX(0.9924)">Add </span>
<span class="t a" style="left:80.88px;top:202px">a </span>
<span class="t a" style="left:90.34px;top:202px;transform:scaleX(1.0464)">sub-condition </span>
<span class="t n" style="left:63.50px;top:218px;transform:scaleX(0.9526)">The </span>
<span class="t n" style="left:84.84px;top:218px;transform:scaleX(1.0241)">animation </span>
<span class="t n" style="left:137.72px;top:218px;transform:scaleX(1.1243)">of </span>
<span class="t o" style="left:164.65px;top:218px;transform:scaleX(0.9952)">Giocatore </span>
<span class="t n" style="left:220.21px;top:218px;transform:scaleX(0.9733)">is </span>
<span class="t n" style="left:231.50px;top:218px;transform:scaleX(1.0132)">finished </span>
<span class="t a" style="left:49.75px;top:235px;transform:scaleX(1.0127)">Add </span>
<span class="t a" style="left:73.54px;top:235px;transform:scaleX(1.0568)">condition </span>
<span class="t n" style="left:407.07px;top:150px;transform:scaleX(0.9254)">Set </span>
<span class="t n" style="left:425.84px;top:150px;transform:scaleX(1.0283)">animation </span>
<span class="t n" style="left:478.72px;top:150px;transform:scaleX(1.1351)">of </span>
<span class="t o" style="left:506.05px;top:150px;transform:scaleX(0.9894)">Giocatore </span>
<span class="t n" style="left:561.50px;top:150px;transform:scaleX(1.1111)">to </span>
<span class="t s" style="left:575.94px;top:150px;transform:scaleX(1.0275)">"Idle" </span>
<span class="t a" style="left:393.35px;top:167px;transform:scaleX(1.0177)">Add </span>
<span class="t a" style="left:416.84px;top:167px;transform:scaleX(1.0414)">action </span>
<span class="t tt" style="left:45.49px;top:253px;transform:scaleX(0.9408)">Repeat </span>
<span class="t tt" style="left:83.10px;top:253px;transform:scaleX(1.0846)">for </span>
<span class="t tt" style="left:100.46px;top:253px;transform:scaleX(0.9532)">each </span>
<span class="t tt" style="left:126.61px;top:253px;transform:scaleX(0.9756)">instance </span>
<span class="t tt" style="left:171.24px;top:253px;transform:scaleX(1.0595)">of </span>
<span class="t tt" style="left:183.94px;top:253px;transform:scaleX(1.0192)">Marker: </span>
<span class="t a" style="left:49.75px;top:268px;transform:scaleX(1.0127)">Add </span>
<span class="t a" style="left:73.54px;top:268px;transform:scaleX(1.0568)">condition </span>
<span class="t a" style="left:393.35px;top:268px;transform:scaleX(1.0177)">Add </span>
<span class="t a" style="left:416.84px;top:268px;transform:scaleX(1.0414)">action </span>
<span class="t n" style="left:94.30px;top:287px;transform:scaleX(0.9526)">The </span>
<span class="t n" style="left:115.64px;top:287px;transform:scaleX(1.0241)">animation </span>
<span class="t n" style="left:168.52px;top:287px;transform:scaleX(1.1243)">of </span>
<span class="t o" style="left:195.45px;top:287px;transform:scaleX(0.9952)">Giocatore </span>
<span class="t n" style="left:250.71px;top:287px;transform:scaleX(0.9867)">is </span>
<span class="t s" style="left:262.74px;top:287px;transform:scaleX(1.0389)">"Death" </span>
<span class="t n" style="left:94.30px;top:305px;transform:scaleX(0.9526)">The </span>
<span class="t n" style="left:115.64px;top:305px;transform:scaleX(1.0241)">animation </span>
<span class="t n" style="left:168.52px;top:305px;transform:scaleX(1.1243)">of </span>
<span class="t o" style="left:195.45px;top:305px;transform:scaleX(0.9952)">Giocatore </span>
<span class="t n" style="left:250.71px;top:305px;transform:scaleX(0.9867)">is </span>
<span class="t s" style="left:262.75px;top:305px">"LeftPunch" </span>
<span class="t n" style="left:94.30px;top:323px;transform:scaleX(0.9526)">The </span>
<span class="t n" style="left:115.64px;top:323px;transform:scaleX(1.0241)">animation </span>
<span class="t n" style="left:168.52px;top:323px;transform:scaleX(1.1243)">of </span>
<span class="t o" style="left:195.45px;top:323px;transform:scaleX(0.9952)">Giocatore </span>
<span class="t n" style="left:250.71px;top:323px;transform:scaleX(0.9867)">is </span>
<span class="t s" style="left:262.75px;top:323px;transform:scaleX(1.0054)">"RightPunch" </span>
<span class="t n" style="left:81.50px;top:340px;transform:scaleX(0.9526)">The </span>
<span class="t n" style="left:102.84px;top:340px;transform:scaleX(1.0241)">animation </span>
<span class="t n" style="left:155.72px;top:340px;transform:scaleX(1.1243)">of </span>
<span class="t o" style="left:183.10px;top:340px;transform:scaleX(0.9815)">ArmaInUso </span>
<span class="t n" style="left:245.21px;top:340px;transform:scaleX(0.9867)">is </span>
<span class="t s" style="left:257.55px;top:340px;transform:scaleX(1.0164)">"Pugno" </span>
<span class="t o" style="left:94.95px;top:358px;transform:scaleX(0.9913)">Giocatore </span>
<span class="t n" style="left:150.42px;top:358px;transform:scaleX(0.9667)">is </span>
<span class="t n" style="left:161.14px;top:358px;transform:scaleX(1.0468)">on </span>
<span class="t n" style="left:177.80px;top:358px;transform:scaleX(1.0667)">floor </span>
<span class="t o" style="left:95.18px;top:376px;transform:scaleX(1.0317)">Marker </span>
<span class="t n" style="left:136.81px;top:376px;transform:scaleX(0.9867)">is </span>
<span class="t n" style="left:147.56px;top:376px;transform:scaleX(1.0710)">in </span>
<span class="t n" style="left:159.54px;top:376px;transform:scaleX(1.0282)">collision </span>
<span class="t n" style="left:203.57px;top:376px;transform:scaleX(1.0633)">with </span>
<span class="t o" style="left:241.80px;top:376px;transform:scaleX(0.9923)">FireRoundButton </span>
<span class="t n" style="left:81.40px;top:393px;transform:scaleX(0.9857)">Trigger </span>
<span class="t n" style="left:118.85px;top:393px;transform:scaleX(1.0189)">once </span>
<span class="t a" style="left:67.55px;top:410px;transform:scaleX(1.0127)">Add </span>
<span class="t a" style="left:91.34px;top:410px;transform:scaleX(1.0568)">condition </span>
<span class="t n" style="left:406.86px;top:287px;transform:scaleX(0.9626)">Change </span>
<span class="t n" style="left:448.80px;top:287px;transform:scaleX(0.9377)">the </span>
<span class="t n" style="left:467.45px;top:287px;transform:scaleX(0.9911)">variable </span>
<span class="t v" style="left:522.96px;top:287px;transform:scaleX(0.9869)">Punch </span>
<span class="t n" style="left:557.93px;top:287px;transform:scaleX(1.0811)">of </span>
<span class="t o" style="left:584.85px;top:287px;transform:scaleX(0.9913)">Giocatore</span>
<span class="t n" style="left:637.40px;top:287px">: </span>
<span class="t op" style="left:644.20px;top:287px">= </span>
<span class="t s" style="left:655.97px;top:287px;transform:scaleX(0.9765)">RandomInRange(1,2) </span>
<span class="t a" style="left:393.35px;top:304px;transform:scaleX(1.0177)">Add </span>
<span class="t a" style="left:416.84px;top:304px;transform:scaleX(1.0414)">action </span>
<span class="t n" style="left:99.60px;top:429px;transform:scaleX(0.9263)">The </span>
<span class="t n" style="left:120.94px;top:429px;transform:scaleX(0.9707)">variable </span>
<span class="t v" style="left:175.86px;top:429px;transform:scaleX(0.9869)">Punch </span>
<span class="t n" style="left:210.42px;top:429px;transform:scaleX(1.1027)">of </span>
<span class="t o" style="left:237.65px;top:429px;transform:scaleX(0.9913)">Giocatore </span>
<span class="t s" style="left:294.80px;top:429px">= </span>
<span class="t s" style="left:306.57px;top:429px">1 </span>
<span class="t n" style="left:407.07px;top:429px;transform:scaleX(0.9254)">Set </span>
<span class="t n" style="left:425.84px;top:429px;transform:scaleX(1.0283)">animation </span>
<span class="t n" style="left:478.72px;top:429px;transform:scaleX(1.1351)">of </span>
<span class="t o" style="left:506.05px;top:429px;transform:scaleX(0.9894)">Giocatore </span>
<span class="t n" style="left:561.50px;top:429px;transform:scaleX(1.1111)">to </span>
<span class="t s" style="left:575.95px;top:429px;transform:scaleX(1.0054)">"RightPunch" </span>
<span class="t a" style="left:85.45px;top:446px;transform:scaleX(1.0127)">Add </span>
<span class="t a" style="left:109.24px;top:446px;transform:scaleX(1.0568)">condition </span>
<span class="t a" style="left:393.35px;top:446px;transform:scaleX(1.0177)">Add </span>
<span class="t a" style="left:416.84px;top:446px;transform:scaleX(1.0414)">action </span>
<span class="t n" style="left:99.60px;top:466px;transform:scaleX(0.9263)">The </span>
<span class="t n" style="left:120.94px;top:466px;transform:scaleX(0.9707)">variable </span>
<span class="t v" style="left:175.86px;top:466px;transform:scaleX(0.9869)">Punch </span>
<span class="t n" style="left:210.42px;top:466px;transform:scaleX(1.1027)">of </span>
<span class="t o" style="left:237.65px;top:466px;transform:scaleX(0.9913)">Giocatore </span>
<span class="t s" style="left:294.80px;top:466px">= </span>
<span class="t s" style="left:306.67px;top:466px">2 </span>
<span class="t n" style="left:407.07px;top:465px;transform:scaleX(0.9254)">Set </span>
<span class="t n" style="left:425.84px;top:465px;transform:scaleX(1.0283)">animation </span>
<span class="t n" style="left:478.72px;top:465px;transform:scaleX(1.1351)">of </span>
<span class="t o" style="left:506.05px;top:465px;transform:scaleX(0.9894)">Giocatore </span>
<span class="t n" style="left:561.50px;top:465px;transform:scaleX(1.1111)">to </span>
<span class="t s" style="left:575.95px;top:465px">"LeftPunch" </span>
</div>
</div>
</body>
</html>
